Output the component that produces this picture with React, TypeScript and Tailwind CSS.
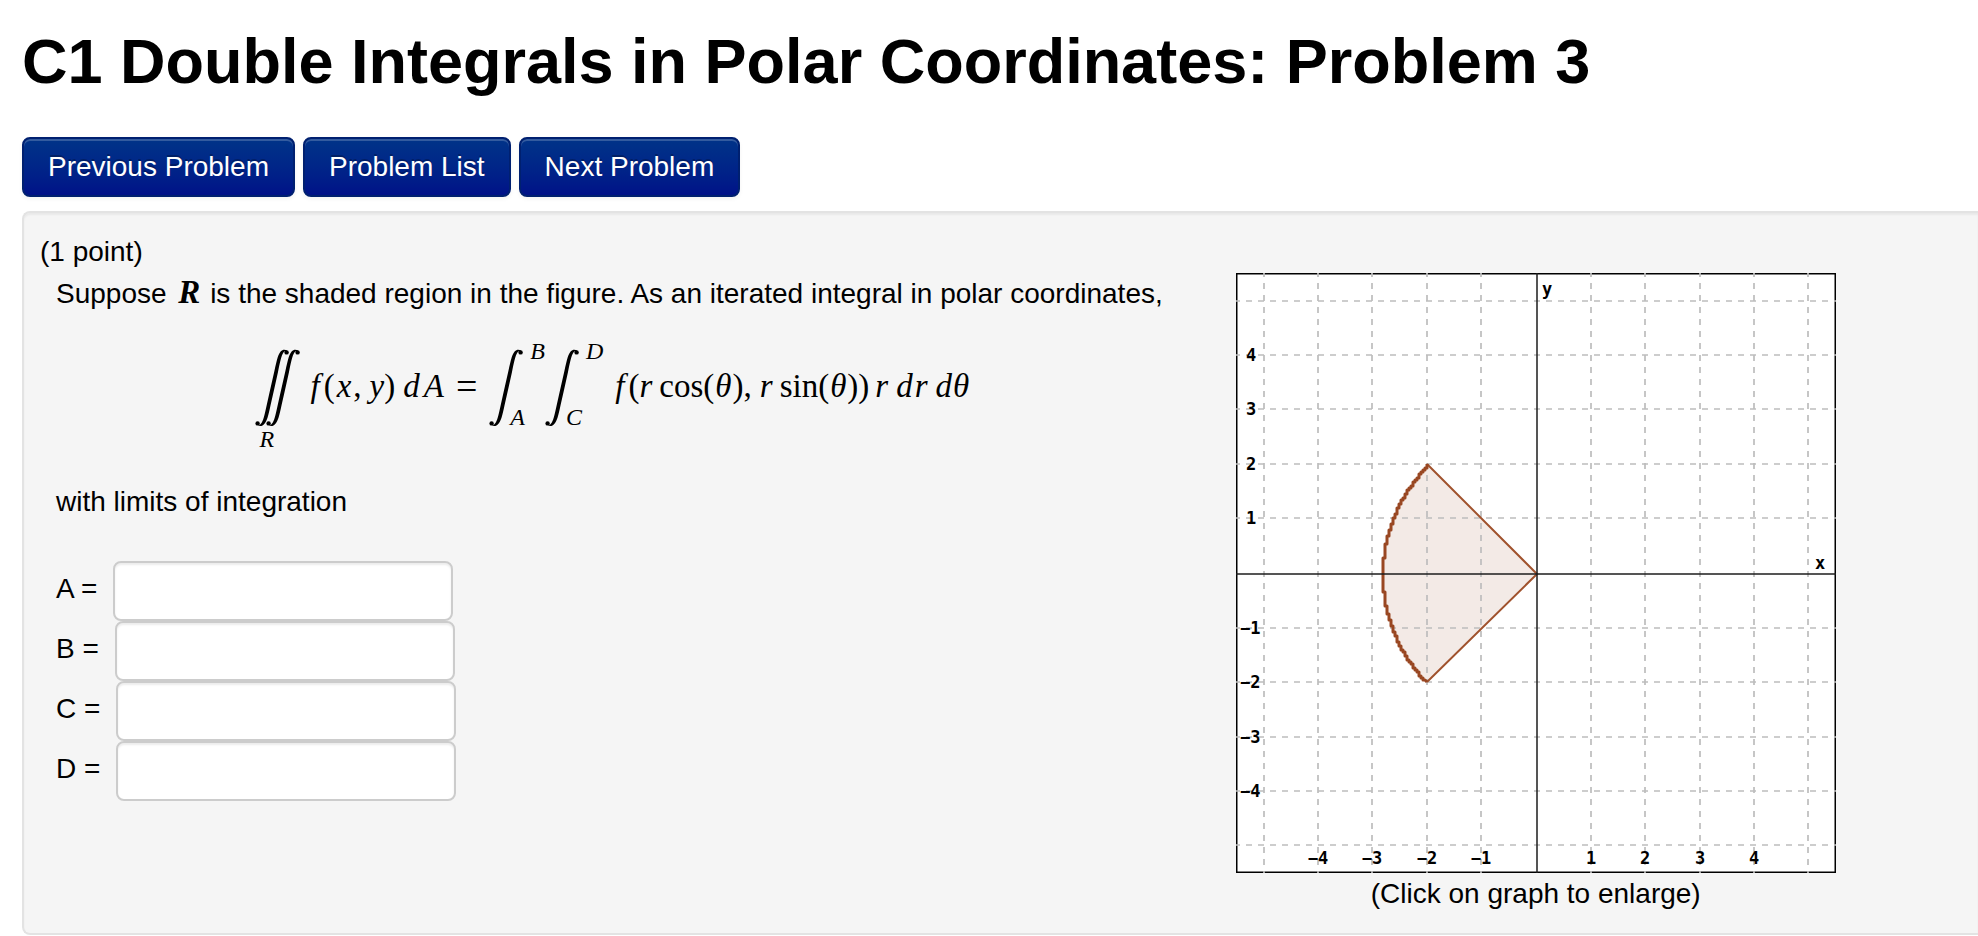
import React from 'react';

const navigation = ['Previous Problem', 'Problem List', 'Next Problem'];

const answers = ['A', 'B', 'C', 'D'];

// grid line positions for -5 .. 5 on the 600 unit canvas
const gridLines = [28, 82, 136, 191, 245, 301, 355, 409, 464, 518, 572];
const ticks = [-4, -3, -2, -1, 1, 2, 3, 4];

const position = (value: number) => gridLines[value + 5];
const label = (value: number) => (value < 0 ? `−${Math.abs(value)}` : `${value}`);

// plot the arc of radius sqrt(8) on a coarse pixel grid
function arcPoints() {
  const radius = 154;
  const points: string[] = ['191,191'];
  let lastX = 191;
  for (let y = 191; y <= 409; y += 2) {
    const x = 301 - Math.round(Math.sqrt(radius * radius - (301 - y) ** 2) / 2) * 2;
    if (x < 191 && x !== lastX) {
      points.push(`${lastX},${y}`, `${x},${y}`);
      lastX = x;
    }
  }
  points.push('191,409');
  return points.join(' ');
}

function Graph() {
  return (
    <svg
      viewBox="0 0 600 600"
      className="block h-auto w-[600px] bg-white"
      role="img"
      aria-label="Shaded region R in the xy-plane"
    >
      <rect x="0.75" y="0.75" width="598.5" height="598.5" fill="none" stroke="#000" strokeWidth="1.5" />
      <polygon points={`301,301 ${arcPoints()}`} fill="#f3eae6" />
      <g stroke="#bdbdbd" strokeWidth="1.7" strokeDasharray="6 6" strokeDashoffset="2">
        {gridLines.filter((line) => line !== 301).map((line) => (
          <React.Fragment key={line}>
            <line x1="0" y1={line} x2="600" y2={line} />
            <line x1={line} y1="0" x2={line} y2="600" />
          </React.Fragment>
        ))}
      </g>
      <polyline points="191,191 301,301 191,409" fill="none" stroke="#a0522d" strokeWidth="2" />
      <polyline points={arcPoints()} fill="none" stroke="#994722" strokeWidth="3" strokeLinejoin="round" />
      <g stroke="#1c1c1c" strokeWidth="1.5">
        <line x1="0" y1="301" x2="600" y2="301" />
        <line x1="301" y1="0" x2="301" y2="600" />
      </g>
      <g className="font-['DejaVu_Sans_Mono',monospace] text-[17px] font-bold" fill="#000">
        {ticks.map((tick) => (
          <React.Fragment key={tick}>
            <text x={position(tick)} y="591" textAnchor="middle">{label(tick)}</text>
            <text x={tick > 0 ? 10 : 4} y={position(-tick) + 6}>{label(tick)}</text>
          </React.Fragment>
        ))}
        <text x="306" y="22">y</text>
        <text x="579" y="296">x</text>
      </g>
    </svg>
  );
}

function IntegralSign({ double = false }: { double?: boolean }) {
  return (
    <svg
      viewBox={double ? '0 0 45 78' : '0 0 35 78'}
      className={double ? 'h-[78px] w-[45px]' : 'h-[78px] w-[35px]'}
      aria-hidden="true"
    >
      {(double ? [0, 11] : [0]).map((x) => (
        <g key={x} transform={`translate(${x} 0)`}>
          <path d="M32 1.6C28.5 -0.8 24.8 1.6 22.8 8C21.6 12 20.6 16.5 19.4 22L14.4 44L10.4 62C9 68.5 7.6 73.6 5.2 75.4L3 76.2C6.8 78.6 10.6 75 12.6 68.4C13.6 65 14.6 61 15.6 56L19 41L23 23C24.6 15 26.2 6.6 28.4 3.4C29.4 2 31 1.8 32 3.2Z" />
          <circle cx="31.6" cy="3.4" r="2.2" />
          <circle cx="2.6" cy="74.4" r="2.2" />
        </g>
      ))}
    </svg>
  );
}

function BoundedIntegral({ lower, upper }: { lower: string; upper: string }) {
  return (
    <div className="flex">
      <div className="pt-2.5">
        <IntegralSign />
      </div>
      <div className="-ml-3.5 flex h-[90px] flex-col justify-between text-[24px] leading-6 italic">
        <span className="pl-5">{upper}</span>
        <span>{lower}</span>
      </div>
    </div>
  );
}

function Equation() {
  return (
    <div className="flex justify-center pl-1.5 font-['Liberation_Serif',serif] text-[33px]">
      <div className="pt-2.5">
        <IntegralSign double />
        <div className="pl-1 text-[24px] leading-6 italic">R</div>
      </div>
      <div className="flex pt-2.5 pl-2.5 leading-[74px] whitespace-nowrap">
        <i>f</i>
        <span className="pl-1">(</span>
        <i className="pl-0.5">x</i>
        <span className="pr-2 pl-0.5">,</span>
        <i>y</i>
        <span>)</span>
        <i className="pl-2">d</i>
        <i className="pl-1">A</i>
        <span className="px-3 text-[38px]">=</span>
      </div>
      <BoundedIntegral lower="A" upper="B" />
      <BoundedIntegral lower="C" upper="D" />
      <div className="flex pt-2.5 pl-3 leading-[74px] whitespace-nowrap">
        <i>f</i>
        <span className="pl-1">(</span>
        <i className="pr-px">r</i>
        <span className="pl-1.5">cos(</span>
        <i className="px-px">θ</i>
        <span>)</span>
        <span className="pr-2">,</span>
        <i className="pr-px">r</i>
        <span className="pl-1.5">sin(</span>
        <i className="px-px">θ</i>
        <span>))</span>
        <i className="pl-1.5">r</i>
        <i className="pl-2">d</i>
        <i className="pl-0.5">r</i>
        <i className="pl-2">d</i>
        <i className="pl-px">θ</i>
      </div>
    </div>
  );
}

export default function App() {
  return (
    <div className="min-h-screen overflow-x-hidden bg-white pl-[22px] font-['Liberation_Sans',Arial,sans-serif] text-[28px] leading-[42px] text-black">
      <h1 className="pt-[21px] text-[63px] leading-[80px] font-bold">
        C1 Double Integrals in Polar Coordinates: Problem 3
      </h1>

      <nav className="mt-9 flex flex-wrap gap-2">
        {navigation.map((name) => (
          <button
            key={name}
            type="button"
            className="rounded-lg border-2 border-[#002070] bg-linear-to-b from-[#003388] to-[#001188] px-6 py-2 leading-10 text-white shadow-[inset_0_2px_0_rgba(255,255,255,0.2),0_2px_4px_rgba(0,0,0,0.05)] [text-shadow:0_-2px_0_rgba(0,0,0,0.25)]"
          >
            {name}
          </button>
        ))}
      </nav>

      <main className="mt-3.5 rounded-l-lg border-2 border-r-0 border-[#e3e3e3] bg-[#f5f5f5] px-4 py-[18px] shadow-[inset_0_2px_2px_rgba(0,0,0,0.05)]">
        <p>(1 point)</p>
        <div className="flex items-start gap-[73px] pl-4">
          <div>
            <p>
              Suppose{' '}
              <span className="mr-0.5 ml-1 font-['Liberation_Serif',serif] text-[33px] leading-none font-bold italic">R</span>{' '}
              is the shaded region in the figure. As an iterated integral in polar coordinates,
            </p>
            <div className="mt-6 mb-[30px]">
              <Equation />
            </div>
            <p>with limits of integration</p>
            <div className="mt-[38px]">
              {answers.map((name) => (
                <div key={name} className="flex items-center">
                  <label htmlFor={`answer-${name}`} className="pr-4 pb-1">
                    {name} =
                  </label>
                  <input
                    id={`answer-${name}`}
                    type="text"
                    className="h-[60px] w-[340px] rounded-lg border-2 border-[#cccccc] bg-white px-3 shadow-[inset_0_2px_2px_rgba(0,0,0,0.075)]"
                  />
                </div>
              ))}
            </div>
          </div>
          <figure className="shrink-0">
            <a href="#graph">
              <Graph />
            </a>
            <figcaption className="text-center">(Click on graph to enlarge)</figcaption>
          </figure>
        </div>
      </main>
    </div>
  );
}
